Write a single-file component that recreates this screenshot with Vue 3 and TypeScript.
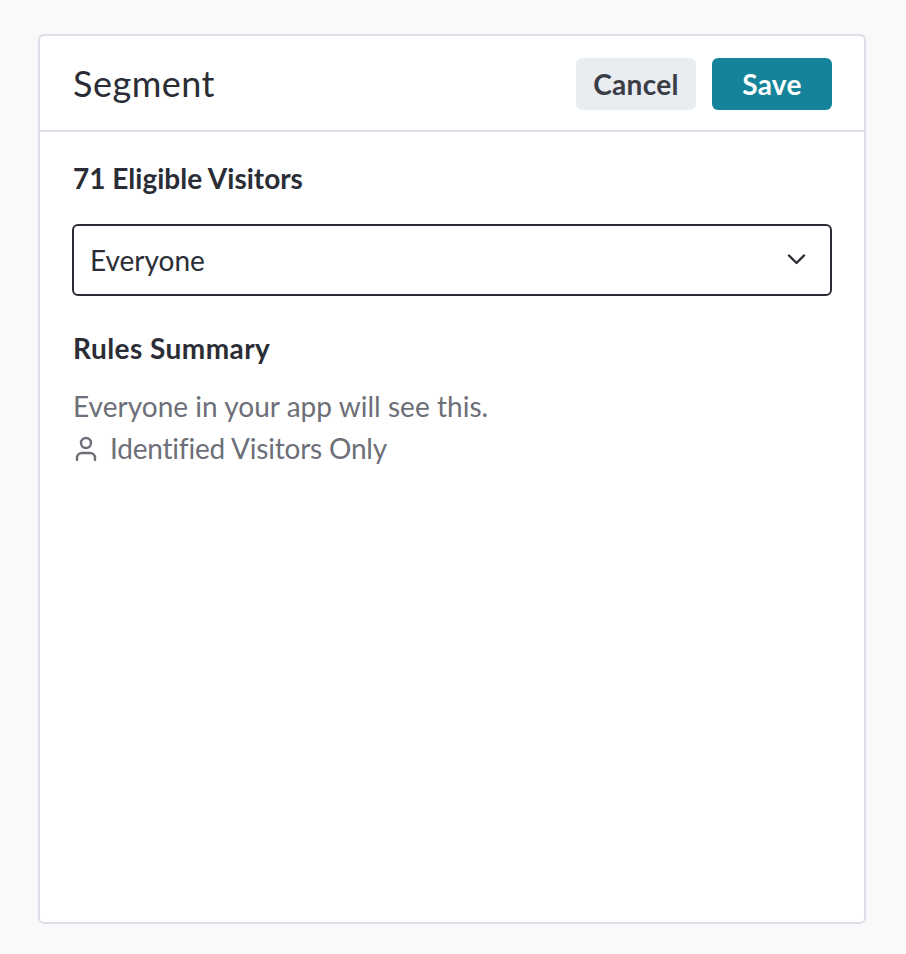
<script setup lang="ts">
const title = 'Segment'
</script>

<template>
  <main class="page">
    <section class="card">
      <header class="head">
        <h1 class="title">{{ title }}</h1>
        <div class="actions">
          <button class="btn cancel" type="button">Cancel</button>
          <button class="btn save" type="button">Save</button>
        </div>
      </header>
      <div class="body">
        <h2 class="label first">71 Eligible Visitors</h2>
        <div class="select">
          <span>Everyone</span>
          <svg class="chev" width="20" height="20" viewBox="0 0 20 20" fill="none">
            <path d="M3 5.500 10.500 13 18 5.500" stroke="#2a2d35" stroke-width="2.400" stroke-linecap="round" stroke-linejoin="round" />
          </svg>
        </div>
        <h2 class="label second">Rules Summary</h2>
        <p class="text summary">Everyone in your app will see this.</p>
        <div class="text identified">
          <svg class="person" width="26" height="26" viewBox="0 0 26 26" fill="none">
            <circle cx="13" cy="8" r="5" stroke="#6d6f78" stroke-width="2.400" />
            <path d="M4 25v-2c0-2.800 2.200-5 5-5h8c2.800 0 5 2.200 5 5v2" stroke="#6d6f78" stroke-width="2.400" stroke-linecap="round" />
          </svg>
          <span class="only">Identified Visitors Only</span>
        </div>
      </div>
    </section>
  </main>
</template>

<style>
html, body { margin: 0; background: #f9f9f9; }
</style>

<style scoped>
.page {
  box-sizing: border-box;
  width: 906px;
  height: 954px;
  padding: 34px 40px 30px 38px;
  font-family: "Lato", "Open Sans", sans-serif;
}
.card {
  box-sizing: border-box;
  height: 890px;
  background: #fff;
  border: 2px solid #dcdee8;
  border-radius: 6px;
}
.head {
  box-sizing: border-box;
  height: 96px;
  display: flex;
  align-items: center;
  justify-content: space-between;
  padding: 2px 32px 0;
  border-bottom: 2px solid #dcdee8;
}
.title {
  margin: -2px 0 0 1px;
  font-size: 36px;
  letter-spacing: 0.5px;
  font-weight: 400;
  color: #2a2d35;
}
.actions { display: flex; gap: 16px; }
.btn {
  width: 120px;
  height: 52px;
  border: 0;
  border-radius: 6px;
  font-family: inherit;
  font-size: 28px;
  letter-spacing: 0.3px;
  font-weight: 700;
}
.cancel { background: #e9ecf0; color: #3a3d45; }
.save { background: #15849a; color: #fff; }
.body { padding: 0 32px; }
.label {
  margin: 0 0 0 1px;
  font-size: 28px;
  line-height: 36px;
  font-weight: 700;
  color: #2a2d35;
}
.first { padding-top: 28px; }
.select {
  box-sizing: border-box;
  height: 72px;
  margin-top: 28px;
  display: flex;
  align-items: center;
  justify-content: space-between;
  padding: 0 24px 0 16px;
  border: 2px solid #2a2d35;
  border-radius: 6px;
  font-size: 28px;
  color: #2a2d35;
}
.second { margin-top: 34px; letter-spacing: 0.45px; }
.text {
  margin-left: 1px;
  font-size: 28px;
  line-height: 42px;
  color: #6d6f78;
}
.summary { margin-top: 19px; margin-bottom: 0; letter-spacing: 0.03px; }
.identified { display: flex; align-items: center; gap: 11px; }
.only { letter-spacing: -0.2px; }
.person { flex: none; }
</style>
